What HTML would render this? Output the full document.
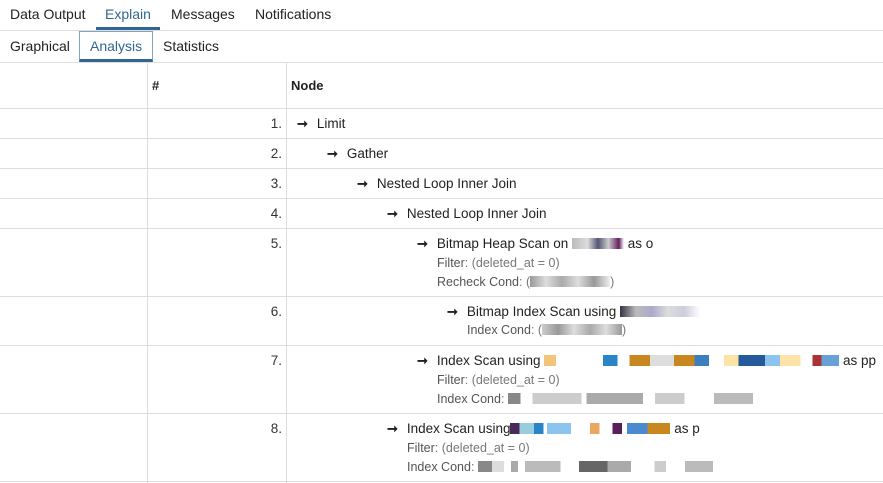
<!DOCTYPE html>
<html><head><meta charset="utf-8"><style>
*{box-sizing:border-box;margin:0;padding:0}
body{width:883px;height:483px;background:#fff;font-family:"Liberation Sans",sans-serif;color:#222;font-size:13.5px;overflow:hidden;position:relative}
.abs{position:absolute}
.tab{position:absolute;top:6px;font-size:14px;color:#222}
.hl{position:absolute;left:0;width:883px;height:1px;background:#dedede}
.vl{position:absolute;width:1px;background:#dedede}
.num{position:absolute;width:60px;text-align:right;left:222px;font-size:13.5px;color:#333}
.n{position:absolute;white-space:nowrap;font-size:13.5px;color:#222}
.n b.ar{font-weight:bold;margin-right:9px;font-size:13px}
.d{position:absolute;white-space:nowrap;font-size:12.5px;color:#777}
.d b{color:#555;font-weight:normal}
.blk{display:inline-block;height:11px;vertical-align:-1px}
</style></head><body>
<div class="tab" style="left:10px">Data Output</div>
<div class="tab" style="left:105px;color:#326690">Explain</div>
<div class="tab" style="left:171px">Messages</div>
<div class="tab" style="left:255px">Notifications</div>
<div class="abs" style="left:96px;top:27px;width:64px;height:3px;background:#326690"></div>
<div class="hl" style="top:30px"></div>
<div class="tab" style="left:10px;top:38px">Graphical</div>
<div class="abs" style="left:79px;top:31px;width:74px;height:31px;border:1px solid #7ea5c4;border-bottom:3px solid #326690"></div>
<div class="tab" style="left:90px;top:38px;color:#326690">Analysis</div>
<div class="tab" style="left:163px;top:38px">Statistics</div>
<div class="hl" style="top:62px"></div>
<div class="vl" style="left:147px;top:62px;height:421px"></div>
<div class="vl" style="left:286px;top:62px;height:421px"></div>
<div class="abs" style="left:152px;top:78px;font-weight:bold;font-size:13px">#</div>
<div class="abs" style="left:291px;top:78px;font-weight:bold;font-size:13px">Node</div>
<div class="hl" style="top:108px"></div>
<div class="hl" style="top:138px"></div>
<div class="hl" style="top:168px"></div>
<div class="hl" style="top:198px"></div>
<div class="hl" style="top:228px"></div>
<div class="hl" style="top:296px"></div>
<div class="hl" style="top:345px"></div>
<div class="hl" style="top:413px"></div>
<div class="hl" style="top:481px"></div>

<div class="num" style="top:116px">1.</div>
<div class="n" style="left:297px;top:116px"><b class="ar">➞</b>Limit</div>
<div class="num" style="top:146px">2.</div>
<div class="n" style="left:327px;top:146px"><b class="ar">➞</b>Gather</div>
<div class="num" style="top:176px">3.</div>
<div class="n" style="left:357px;top:176px"><b class="ar">➞</b>Nested Loop Inner Join</div>
<div class="num" style="top:206px">4.</div>
<div class="n" style="left:387px;top:206px"><b class="ar">➞</b>Nested Loop Inner Join</div>

<div class="num" style="top:236px">5.</div>
<div class="n" style="left:417px;top:236px"><b class="ar">➞</b>Bitmap Heap Scan on <span class="blk" style="width:52px;background:linear-gradient(90deg,#bbb,#ddd 30%,#557 50%,#ccc 70%,#62205f 90%,#fff)"></span> as o</div>
<div class="d" style="left:437px;top:256px"><b>Filter</b>: (deleted_at = 0)</div>
<div class="d" style="left:437px;top:275px"><b>Recheck Cond</b>: (<span class="blk" style="width:80px;background:linear-gradient(90deg,#999,#ddd,#aaa,#ddd,#999,#eee)"></span>)</div>

<div class="num" style="top:304px">6.</div>
<div class="n" style="left:447px;top:304px"><b class="ar">➞</b>Bitmap Index Scan using <span class="blk" style="width:80px;background:linear-gradient(90deg,#334,#bbb,#aac,#ddd,#ccd,#fff)"></span></div>
<div class="d" style="left:467px;top:323px"><b>Index Cond</b>: (<span class="blk" style="width:80px;background:linear-gradient(90deg,#ccc,#999,#ddd,#aaa,#ddd,#999)"></span>)</div>

<div class="num" style="top:353px">7.</div>
<div class="n" style="left:417px;top:353px"><b class="ar">➞</b>Index Scan using <span class="blk" style="width:295px;background:linear-gradient(90deg,#f2c37a 0 4%,#fff 4% 20%,#2a84c8 20% 25%,#fff 25% 29%,#c8881f 29% 36%,#ddd 36% 44%,#c8881f 44% 51%,#3b7fc0 51% 56%,#fff 56% 61%,#fde3a8 61% 66%,#245a99 66% 75%,#8bc4ee 75% 80%,#fde3a8 80% 87%,#fff 87% 91%,#a33 91% 94%,#6aa0d8 94%)"></span> as pp</div>
<div class="d" style="left:437px;top:373px"><b>Filter</b>: (deleted_at = 0)</div>
<div class="d" style="left:437px;top:392px"><b>Index Cond</b>: <span class="blk" style="width:245px;background:linear-gradient(90deg,#888 0 5%,#fff 5% 10%,#ccc 10% 30%,#fff 30% 32%,#aaa 32% 55%,#fff 55% 60%,#ccc 60% 72%,#fff 72% 84%,#bbb 84%)"></span></div>

<div class="num" style="top:421px">8.</div>
<div class="n" style="left:387px;top:421px"><b class="ar">➞</b>Index Scan using<span class="blk" style="width:160px;background:linear-gradient(90deg,#4a2a5a 0 6%,#9cd 6% 15%,#2a84c8 15% 21%,#fff 21% 23%,#8bc4ee 23% 38%,#fff 38% 50%,#e8a860 50% 56%,#fff 56% 64%,#5a1e5a 64% 70%,#fff 70% 73%,#4a8ad0 73% 86%,#c8881f 86%)"></span> as p</div>
<div class="d" style="left:407px;top:441px"><b>Filter</b>: (deleted_at = 0)</div>
<div class="d" style="left:407px;top:460px"><b>Index Cond</b>: <span class="blk" style="width:235px;background:linear-gradient(90deg,#888 0 6%,#ddd 6% 11%,#fff 11% 14%,#aaa 14% 17%,#fff 17% 20%,#bbb 20% 35%,#fff 35% 43%,#666 43% 55%,#aaa 55% 65%,#fff 65% 75%,#ccc 75% 80%,#fff 80% 88%,#bbb 88%)"></span></div>
</body></html>
